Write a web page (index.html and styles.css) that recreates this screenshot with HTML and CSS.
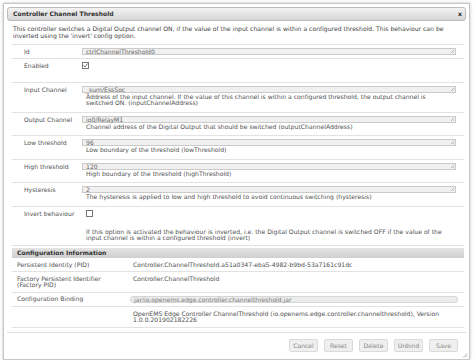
FILE: index.html
```html
<!DOCTYPE html>
<html lang="en">
<head>
    <meta charset="UTF-8">
    <meta name="viewport" content="width=device-width, initial-scale=1.0">
    <title>Controller Channel Threshold</title>
    <link rel="stylesheet" href="styles.css">
</head>
<body>
    <div class="dialog">
        <div class="titlebar">
            <span class="title">Controller Channel Threshold</span>
            <span class="close">x</span>
        </div>

        <div class="content">
            <p class="intro">This controller switches a Digital Output channel ON, if the value of the input channel is within a configured threshold. This behaviour can be inverted using the 'invert' config option.</p>

            <div class="props">
                <div class="row">
                    <div class="label">Id</div>
                    <div class="value">
                        <div class="field">ctrlChannelThreshold0<span class="grip"></span></div>
                    </div>
                </div>
                <div class="row">
                    <div class="label">Enabled</div>
                    <div class="value">
                        <span class="checkbox checked">
                            <svg width="5" height="5" viewBox="0 0 5 5"><path d="M0.6 2.4 L2 3.9 L4.5 0.6" fill="none" stroke="#444" stroke-width="0.8"/></svg>
                        </span>
                        <div class="desc">&nbsp;</div>
                    </div>
                </div>
                <div class="row">
                    <div class="label">Input Channel</div>
                    <div class="value">
                        <div class="field">_sum/EssSoc<span class="grip"></span></div>
                        <div class="desc">Address of the input channel. If the value of this channel is within a configured threshold, the output channel is switched ON. (inputChannelAddress)</div>
                    </div>
                </div>
                <div class="row">
                    <div class="label">Output Channel</div>
                    <div class="value">
                        <div class="field">io0/RelayM1<span class="grip"></span></div>
                        <div class="desc">Channel address of the Digital Output that should be switched (outputChannelAddress)</div>
                    </div>
                </div>
                <div class="row">
                    <div class="label">Low threshold</div>
                    <div class="value">
                        <div class="field">96<span class="grip"></span></div>
                        <div class="desc">Low boundary of the threshold (lowThreshold)</div>
                    </div>
                </div>
                <div class="row">
                    <div class="label">High threshold</div>
                    <div class="value">
                        <div class="field">120<span class="grip"></span></div>
                        <div class="desc">High boundary of the threshold (highThreshold)</div>
                    </div>
                </div>
                <div class="row">
                    <div class="label">Hysteresis</div>
                    <div class="value">
                        <div class="field">2<span class="grip"></span></div>
                        <div class="desc">The hysteresis is applied to low and high threshold to avoid continuous switching (hysteresis)</div>
                    </div>
                </div>
                <div class="row row-last">
                    <div class="label">Invert behaviour</div>
                    <div class="value">
                        <span class="checkbox shifted"></span>
                        <div class="desc desc-gap">If this option is activated the behaviour is inverted, i.e. the Digital Output channel is switched OFF if the value of the input channel is within a configured threshold (invert)</div>
                    </div>
                </div>
            </div>

            <div class="section">Configuration Information</div>
            <div class="info">
                <div class="info-row">
                    <div class="info-label">Persistent Identity (PID)</div>
                    <div class="info-value">Controller.ChannelThreshold.a51a0347-eba5-4982-b9bd-53a7161c91dc</div>
                </div>
                <div class="info-row">
                    <div class="info-label">Factory Persistent Identifier (Factory PID)</div>
                    <div class="info-value">Controller.ChannelThreshold</div>
                </div>
                <div class="info-row">
                    <div class="info-label">Configuration Binding</div>
                    <div class="info-value">
                        <div class="binding">jar/io.openems.edge.controller.channelthreshold.jar</div>
                    </div>
                </div>
                <div class="info-row">
                    <div class="info-label"></div>
                    <div class="info-value">OpenEMS Edge Controller ChannelThreshold (io.openems.edge.controller.channelthreshold), Version 1.0.0.201902182226</div>
                </div>
            </div>
        </div>

        <div class="buttonpane">
            <button class="button">Cancel</button>
            <button class="button">Reset</button>
            <button class="button">Delete</button>
            <button class="button">Unbind</button>
            <button class="button">Save</button>
        </div>

        <svg class="resizer" width="6" height="6" viewBox="0 0 6 6">
            <path d="M5.5 1 L1 5.5 M5.5 3 L3 5.5 M5.5 5 L5 5.5" stroke="#999" stroke-width="0.6"/>
        </svg>
    </div>
</body>
</html>
```

FILE: styles.css
```css
body {
    margin: 0;
    font-family: "DejaVu Sans", Verdana, sans-serif;
    font-size: 6.1px;
    line-height: 6.5px;
    color: #505050;
    background-color: #fff;
}

.dialog {
    position: relative;
    box-sizing: border-box;
    height: 357px;
    margin: 3px 4px 0 3px;
    padding: 3px;
    border: 1px solid #c6c6c6;
    box-shadow: 0 0 3px rgba(0, 0, 0, 0.25);
    display: flex;
    flex-direction: column;
}

.titlebar {
    box-sizing: border-box;
    height: 14px;
    padding: 0 3px 0 5px;
    border: 1px solid #bcbcbc;
    border-radius: 3px;
    background: linear-gradient(#f3f3f3, #d6d6d6);
    display: flex;
    align-items: center;
    justify-content: space-between;
}

.title {
    font-weight: bold;
    color: #333;
}

.close {
    font-weight: bold;
    color: #222;
}

.content {
    padding: 0 2px 0 5px;
}

.intro {
    margin: 0;
    padding: 5px 1px;
    color: #444;
}

.props {
    border-top: 1px solid #e2e2e2;
}

.row {
    display: flex;
    padding: 3px 0;
    border-bottom: 1px solid #e2e2e2;
}

.row-last {
    padding-bottom: 1px;
}

.label {
    width: 58px;
    flex-shrink: 0;
    padding-left: 12px;
    line-height: 7px;
}

.value {
    flex: 1;
    padding-right: 8px;
}

.field {
    position: relative;
    box-sizing: border-box;
    height: 7px;
    padding-left: 3px;
    border: 1px solid #cacaca;
    background-color: #f0f0f0;
    color: #666;
    line-height: 5px;
}

.grip {
    position: absolute;
    right: 1px;
    bottom: 1px;
    width: 3px;
    height: 3px;
    background: linear-gradient(135deg, transparent 45%, #b5b5b5 50%, transparent 60%, transparent 75%, #b5b5b5 80%, transparent 90%);
}

.desc {
    margin: 1px 0 2px;
    padding: 0 4px;
    color: #505050;
}

.desc-gap {
    margin-top: 12px;
}

.checkbox {
    box-sizing: border-box;
    width: 7px;
    height: 7px;
    border: 1px solid #777;
    background-color: #fff;
    display: flex;
    align-items: center;
    justify-content: center;
}

.shifted {
    margin-left: 4px;
}

.section {
    margin-top: 2px;
    padding: 2px 5px;
    height: 6.5px;
    background: linear-gradient(#e4e4e4, #cfcfcf);
    font-weight: bold;
    color: #333;
}

.info-row {
    display: flex;
    padding: 3.5px 0 3px;
    border-bottom: 1px solid #e2e2e2;
}

.info-label {
    box-sizing: border-box;
    width: 121px;
    flex-shrink: 0;
    padding: 0 12px 0 5px;
}

.info-value {
    flex: 1;
    padding-right: 6px;
}

.binding {
    box-sizing: border-box;
    height: 7px;
    margin-left: -3px;
    padding-left: 3px;
    border: 1px solid #d6d6d6;
    border-radius: 3px;
    background-color: #ececec;
    color: #777;
    line-height: 5px;
}

.buttonpane {
    margin-top: auto;
    padding: 6px 8px 4px 0;
    border-top: 1px solid #dedede;
    display: flex;
    justify-content: flex-end;
    gap: 6px;
}

.button {
    box-sizing: border-box;
    width: 29px;
    height: 13px;
    padding: 0;
    border: 1px solid #dadada;
    border-radius: 2px;
    background-color: #efefef;
    font-family: inherit;
    font-size: 6.1px;
    color: #888;
    cursor: pointer;
}

.resizer {
    position: absolute;
    right: 1px;
    bottom: 1px;
}
```
